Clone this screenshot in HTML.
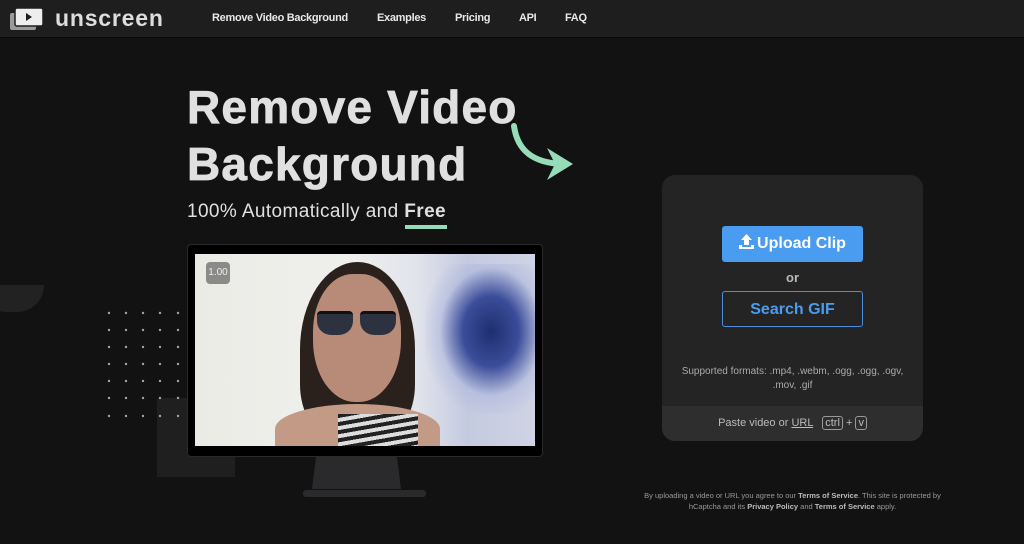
<!DOCTYPE html>
<html><head><meta charset="utf-8"><style>
*{margin:0;padding:0;box-sizing:border-box}
body{width:1024px;height:544px;background:#121212;font-family:"Liberation Sans",sans-serif;position:relative;overflow:hidden;color:#ddd}
.nav{position:absolute;left:0;top:0;width:1024px;height:38px;background:#1e1e1e;border-bottom:1px solid #0a0a0a}
.nav a{position:absolute;top:12px;font-size:11px;font-weight:bold;color:#e8e8e8;text-decoration:none;letter-spacing:-0.3px}
.abs{position:absolute}
h1{position:absolute;left:187px;top:79px;font-size:46px;line-height:57px;font-weight:bold;color:#e0e0e0;letter-spacing:1.2px;-webkit-text-stroke:0.8px #e0e0e0}
.sub{position:absolute;left:187px;top:201px;font-size:19px;color:#e0e0e0;letter-spacing:0.4px}
.card{position:absolute;left:662px;top:175px;width:261px;height:266px;background:#242424;border-radius:13px;overflow:hidden}
.btn{position:absolute;left:60px;width:141px;height:36px;border-radius:3px;font-weight:bold;font-size:16px;text-align:center;line-height:35px}
</style></head><body>
<div class="nav">
<svg class="abs" style="left:9px;top:8px" width="34" height="23"><rect x="1" y="5" width="26" height="17" rx="2" fill="#9a9a9a"/><rect x="6" y="0" width="28" height="18" rx="2" fill="#eee" stroke="#1e1e1e" stroke-width="1.5"/><path d="M17 5l6 4-6 4z" fill="#1e1e1e"/></svg>
<div class="abs" style="left:55px;top:5px;font-size:23px;font-weight:bold;color:#ddd;letter-spacing:0.8px">unscreen</div>
<a style="left:212px">Remove Video Background</a>
<a style="left:377px">Examples</a>
<a style="left:455px">Pricing</a>
<a style="left:519px">API</a>
<a style="left:565px">FAQ</a>
</div>
<div class="abs" style="left:-20px;top:285px;width:64px;height:27px;background:#222;border-radius:0 0 32px 32px"></div>
<div class="abs" style="left:157px;top:398px;width:78px;height:79px;background:#1f1f1f"></div>
<svg class="abs" style="left:105px;top:310px" width="80" height="110">
<g fill="#9aa4b4">
<circle cx="4" cy="3" r="1.2"/><circle cx="21" cy="3" r="1.2"/><circle cx="38" cy="3" r="1.2"/><circle cx="55" cy="3" r="1.2"/><circle cx="73" cy="3" r="1.2"/>
<circle cx="4" cy="20" r="1.2"/><circle cx="21" cy="20" r="1.2"/><circle cx="38" cy="20" r="1.2"/><circle cx="55" cy="20" r="1.2"/><circle cx="73" cy="20" r="1.2"/>
<circle cx="4" cy="37" r="1.2"/><circle cx="21" cy="37" r="1.2"/><circle cx="38" cy="37" r="1.2"/><circle cx="55" cy="37" r="1.2"/><circle cx="73" cy="37" r="1.2"/>
<circle cx="4" cy="54" r="1.2"/><circle cx="21" cy="54" r="1.2"/><circle cx="38" cy="54" r="1.2"/><circle cx="55" cy="54" r="1.2"/><circle cx="73" cy="54" r="1.2"/>
<circle cx="4" cy="71" r="1.2"/><circle cx="21" cy="71" r="1.2"/><circle cx="38" cy="71" r="1.2"/><circle cx="55" cy="71" r="1.2"/><circle cx="73" cy="71" r="1.2"/>
<circle cx="4" cy="88" r="1.2"/><circle cx="21" cy="88" r="1.2"/><circle cx="38" cy="88" r="1.2"/><circle cx="55" cy="88" r="1.2"/><circle cx="73" cy="88" r="1.2"/>
<circle cx="4" cy="106" r="1.2"/><circle cx="21" cy="106" r="1.2"/><circle cx="38" cy="106" r="1.2"/><circle cx="55" cy="106" r="1.2"/><circle cx="73" cy="106" r="1.2"/>
</g></svg>
<h1>Remove Video<br>Background</h1>
<svg class="abs" style="left:505px;top:118px" width="75" height="70"><path d="M9 8 C12 30 25 45 58 46" stroke="#96dcb8" stroke-width="6" fill="none" stroke-linecap="round"/><path d="M42 30 L68 46 L42 62 L50 46z" fill="#96dcb8"/></svg>
<div class="sub">100% Automatically and <b>Free</b></div>
<div class="abs" style="left:405px;top:225px;width:42px;height:4px;background:#96dcb8"></div>
<div class="abs" style="left:187px;top:244px;width:356px;height:213px;background:#000;border:1px solid #2a2a2a;border-radius:4px"></div>
<div class="abs" style="left:195px;top:254px;width:340px;height:192px;overflow:hidden;background:linear-gradient(90deg,#ebebe6 0%,#efefec 45%,#e2e4ec 65%,#c4cae0 80%,#cfd3e4 100%)">
<div class="abs" style="left:230px;top:10px;width:120px;height:150px;background:radial-gradient(ellipse at 55% 45%,#1e2e6e 0%,#3b4d9a 30%,rgba(170,180,220,0.5) 55%,rgba(200,205,225,0) 75%)"></div>
<div class="abs" style="left:105px;top:8px;width:115px;height:175px;background:#2a211d;border-radius:50% 50% 30% 30%"></div>
<div class="abs" style="left:118px;top:20px;width:88px;height:128px;background:#b88a78;border-radius:45% 45% 48% 48%"></div>
<div class="abs" style="left:122px;top:57px;width:36px;height:24px;background:#2c3240;border-radius:4px 4px 14px 14px;border-top:3px solid #111"></div>
<div class="abs" style="left:165px;top:57px;width:36px;height:24px;background:#2c3240;border-radius:4px 4px 14px 14px;border-top:3px solid #111"></div>
<div class="abs" style="left:80px;top:150px;width:165px;height:50px;background:#c29a86;border-radius:50% 50% 0 0"></div>
<div class="abs" style="left:143px;top:160px;width:80px;height:40px;background:repeating-linear-gradient(170deg,#222 0 4px,#ddd 4px 8px)"></div>
<div class="abs" style="left:11px;top:8px;width:24px;height:22px;background:#8a8a88;border-radius:4px;color:#eee;font-size:10px;text-align:center;line-height:22px">1.00</div>
</div>
<svg class="abs" style="left:300px;top:457px" width="130" height="42"><path d="M16 0h81l4 32H12z" fill="#2a2a2c"/><rect x="3" y="33" width="123" height="7" rx="3" fill="#2a2a2c"/></svg>
<div class="card">
<div class="btn" style="top:51px;background:#4a9cf0;color:#fff"><svg width="15" height="15" style="vertical-align:-1px;margin-right:3px"><path d="M7.5 0L13 6H10v5H5V6H2z M0 11h3v2h9v-2h3v4H0z" fill="#fff"/></svg>Upload Clip</div>
<div class="abs" style="left:0;width:261px;top:95px;text-align:center;font-size:13px;font-weight:bold;color:#bbb">or</div>
<div class="btn" style="top:116px;border:1.5px solid #4a8ee0;color:#4a9cf0">Search GIF</div>
<div class="abs" style="left:0;width:261px;top:190px;text-align:center;font-size:10px;line-height:14px;color:#aaa">Supported formats: .mp4, .webm, .ogg, .ogg, .ogv,<br>.mov, .gif</div>
<div class="abs" style="left:0;top:231px;width:261px;height:35px;background:#2e2e2e;text-align:center;font-size:11px;line-height:35px;color:#bbb">Paste video or <u>URL</u> &nbsp; <span style="border:1px solid #999;border-radius:3px;padding:0 2px">ctrl</span> + <span style="border:1px solid #999;border-radius:3px;padding:0 2px">v</span></div>
</div>
<div class="abs" style="left:640px;top:490px;width:305px;text-align:center;font-size:7.5px;line-height:11px;color:#999">By uploading a video or URL you agree to our <b style="color:#bbb">Terms of Service</b>. This site is protected by hCaptcha and its <b style="color:#bbb">Privacy Policy</b> and <b style="color:#bbb">Terms of Service</b> apply.</div>
</body></html>
